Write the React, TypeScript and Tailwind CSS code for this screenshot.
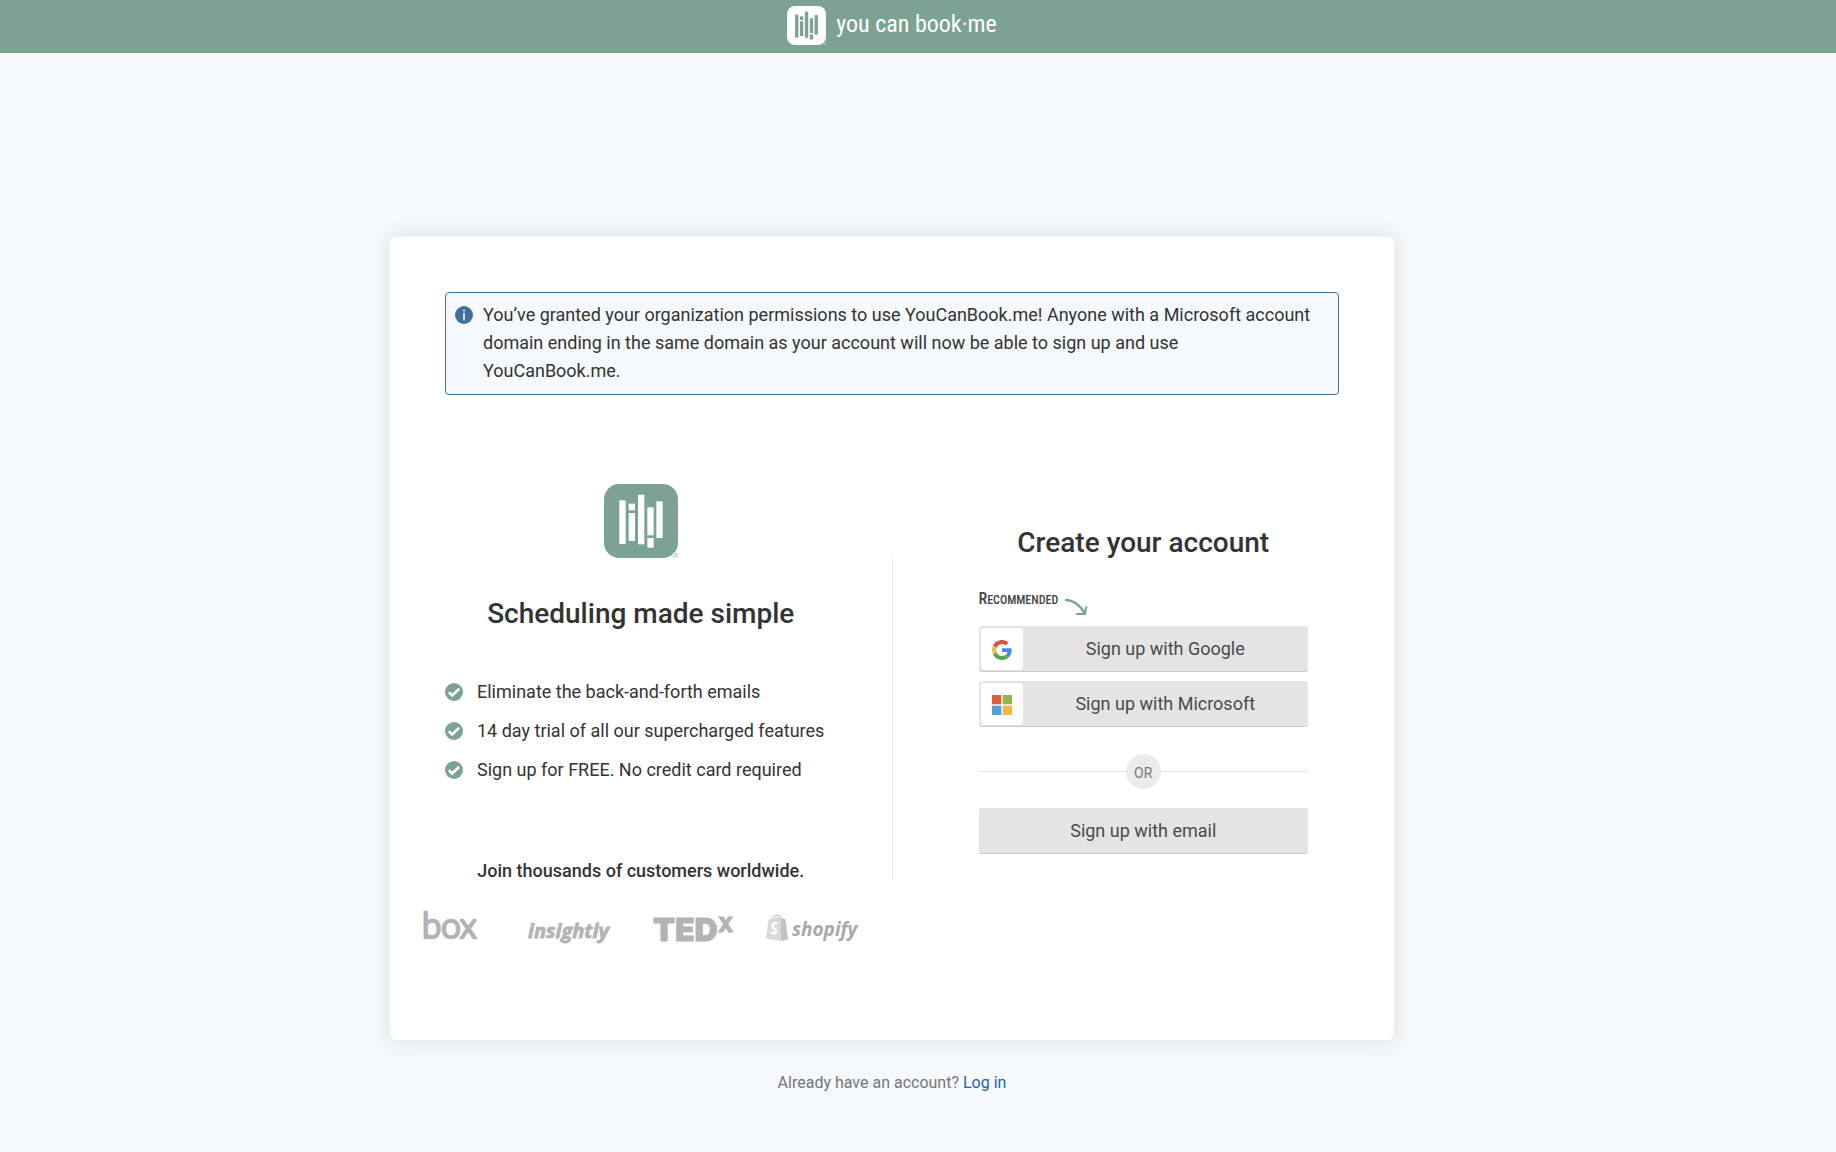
import React from "react";

const BARS = [
  [46, 49, 131],
  [74, 59, 20],
  [74, 87, 84],
  [102, 32, 149],
  [130, 70, 84],
  [130, 162, 29],
  [157, 52, 110],
];

function Mark({ className, tile, bar }: { className: string; tile: string; bar: string }) {
  return (
    <svg viewBox="0 0 222 222" className={className} aria-hidden="true">
      <rect width="222" height="222" rx="46" fill={tile} />
      {BARS.map(([x, y, h]) => (
        <rect key={`${x}-${y}`} x={x} y={y} width="19" height={h} fill={bar} />
      ))}
      <circle cx="214" cy="214" r="9" fill={bar} />
      <circle cx="214" cy="214" r="6" fill={bar} stroke={tile} strokeOpacity="0.6" strokeWidth="3" />
      <circle cx="214" cy="214" r="2" fill={tile} fillOpacity="0.6" />
    </svg>
  );
}

function InfoIcon() {
  return (
    <svg viewBox="0 0 18 18" className="mt-[5px] h-[18px] w-[18px] shrink-0" aria-hidden="true">
      <circle cx="9" cy="9" r="9" fill="#41719a" />
      <circle cx="9" cy="4.6" r="1.1" fill="#dfe9f1" />
      <rect x="8.1" y="6.8" width="1.8" height="7.4" fill="#dfe9f1" />
    </svg>
  );
}

function CheckIcon() {
  return (
    <svg viewBox="0 0 18 18" className="h-[18px] w-[18px] shrink-0" aria-hidden="true">
      <circle cx="9" cy="9" r="9" fill="#7ca294" />
      <path d="M3.8 9.2 7.2 12.4 14.2 5.8" fill="none" stroke="#fff" strokeWidth="2.6" />
    </svg>
  );
}

function GoogleIcon() {
  return (
    <svg viewBox="0 0 48 48" className="mt-0.5 h-5 w-5" aria-hidden="true">
      <path fill="#dc4e41" d="M24 9.5c3.54 0 6.71 1.22 9.21 3.6l6.85-6.85C35.9 2.38 30.47 0 24 0 14.62 0 6.51 5.38 2.56 13.22l7.98 6.19C12.43 13.72 17.74 9.5 24 9.5z" />
      <path fill="#4a86e8" d="M46.98 24.55c0-1.57-.15-3.09-.38-4.55H24v9.02h12.94c-.58 2.96-2.26 5.48-4.78 7.18l7.73 6c4.51-4.18 7.09-10.36 7.09-17.65z" />
      <path fill="#f4bd45" d="M10.53 28.59c-.48-1.45-.76-2.99-.76-4.59s.27-3.14.76-4.59l-7.98-6.19C.92 16.46 0 20.12 0 24c0 3.88.92 7.54 2.56 10.78l7.97-6.19z" />
      <path fill="#57a65a" d="M24 48c6.48 0 11.93-2.13 15.89-5.81l-7.73-6c-2.15 1.45-4.92 2.3-8.16 2.3-6.26 0-11.57-4.22-13.47-9.91l-7.98 6.19C6.51 42.62 14.62 48 24 48z" />
    </svg>
  );
}

function MicrosoftIcon() {
  return (
    <svg viewBox="0 0 20 20" className="mt-0.5 h-5 w-5" aria-hidden="true">
      <rect width="9.3" height="9.3" fill="#dd5f3b" />
      <rect x="10.7" width="9.3" height="9.3" fill="#8fb745" />
      <rect y="10.7" width="9.3" height="9.3" fill="#549fd7" />
      <rect x="10.7" y="10.7" width="9.3" height="9.3" fill="#f3b944" />
    </svg>
  );
}

function ArrowIcon() {
  return (
    <svg viewBox="0 0 24 18" className="mt-[18px] h-[18px] w-6" aria-hidden="true">
      <path d="M1 1.8C9 2.2 16 6.5 20.4 15M12.2 16h8.6l1.6-7.6" fill="none" stroke="#7ca294" strokeWidth="2.2" />
    </svg>
  );
}

function Brands() {
  return (
    <div className="-mx-[22px] flex h-10 items-center">
      <svg viewBox="0 0 56 40" className="h-10 w-14 overflow-visible" role="img" aria-label="box">
        <text x="-1" y="28" fontFamily="Lato, sans-serif" fontWeight="300" fontSize="35" fill="#b3b3b3" stroke="#b3b3b3" strokeWidth="2.6" strokeLinejoin="round">box</text>
      </svg>
      <svg viewBox="0 0 82 40" className="ml-[49px] h-10 w-[82px] overflow-visible" role="img" aria-label="insightly">
        <text x="0" y="28" fontFamily="'Open Sans', sans-serif" fontStyle="italic" fontWeight="700" fontSize="20" fill="#b3b3b3" stroke="#b3b3b3" strokeWidth="0.8" strokeLinejoin="round">insightly</text>
      </svg>
      <svg viewBox="0 0 80 40" className="ml-[43px] h-10 w-20 overflow-visible" role="img" aria-label="TEDx">
        <text x="0" y="31" fontFamily="Inter, sans-serif" fontWeight="900" fontSize="32" fill="#b3b3b3" stroke="#b3b3b3" strokeWidth="0.8">TED</text>
        <text x="65" y="22" fontFamily="Inter, sans-serif" fontWeight="800" fontSize="20" fill="#b3b3b3" stroke="#b3b3b3" strokeWidth="1">X</text>
      </svg>
      <svg viewBox="0 0 91 40" className="ml-[33px] h-10 w-[91px] overflow-visible" role="img" aria-label="shopify">
        <path d="M2.500 9.500 15 7v24L0 28.500z" fill="#d9d9d9" />
        <path d="M15 7l1.500 1.500 3 .5L22 29.500 15 31z" fill="#c2c2c2" />
        <path d="M6 9.500c.5-3 3-5.500 5-4.500 1.500.7 2 2 2 3.500M9 9c.5-2.500 2-4.500 4-4 1.500.3 2.300 1.600 2.300 3" fill="none" stroke="#d0d0d0" strokeWidth="1.1" />
        <path d="M11.400 13.600c-2.600-1.300-5 0-5 2.200 0 2.800 3.900 2.800 3.900 5.500 0 2.200-2.600 2.900-5.300 1" fill="none" stroke="#fff" strokeWidth="2.4" />
        <text x="26" y="26" fontFamily="'Open Sans', sans-serif" fontStyle="italic" fontWeight="700" fontSize="19" fill="#a8a8a8">shopify</text>
      </svg>
    </div>
  );
}

function SignUpButton({ icon, children }: { icon?: React.ReactNode; children: React.ReactNode }) {
  return (
    <button
      type="button"
      className="flex h-[46px] w-full items-center rounded-[3px] border-b border-[#c9c9c9] bg-[#e4e4e4] text-lg text-[#4a4a4a]"
    >
      {icon && (
        <span className="ml-0.5 flex h-[42px] w-[42px] items-center justify-center rounded-sm bg-white">{icon}</span>
      )}
      <span className="flex-1 text-center">{children}</span>
    </button>
  );
}

const FEATURES = [
  "Eliminate the back-and-forth emails",
  "14 day trial of all our supercharged features",
  "Sign up for FREE. No credit card required",
];

export default function App() {
  return (
    <div className="min-h-screen bg-[#f5f9fc] font-['Roboto',sans-serif] text-[#333]">
      <header className="flex h-[53px] items-start justify-center bg-[#7ca294] pt-1.5 pr-[52px]">
        <a href="#" className="flex gap-2.5 text-white">
          <Mark className="h-[39px] w-[39px]" tile="#ffffff" bar="#7ca294" />
          <span className="font-['Liberation_Sans_Narrow','Roboto_Condensed','Liberation_Sans',sans-serif] text-2xl leading-9">
            you can book·me
          </span>
        </a>
      </header>

      <div className="flex flex-col items-center pt-[183px] pr-[52px]">
        <main className="w-full max-w-[1006px] rounded-lg border border-[#f0f0f0] bg-white px-[55px] pt-[55px] pb-[86px] shadow-[0_0_20px_rgba(0,0,0,0.1)]">
          <div role="status" className="flex gap-2.5 rounded border border-[#41719a] bg-[#f5f9fc] pt-2 pr-6 pb-[9px] pl-[9px]">
            <InfoIcon />
            <p className="text-lg leading-7">
              You’ve granted your organization permissions to use YouCanBook.me! Anyone with a Microsoft account domain
              ending in the same domain as your account will now be able to sign up and use YouCanBook.me.
            </p>
          </div>

          <div className="mt-[89px] grid grid-cols-[1fr_1px_1fr]">
            <section className="pr-[55px]">
              <Mark className="mx-auto h-[74px] w-[74px]" tile="#7ca294" bar="#ffffff" />
              <h1 className="mt-[38px] text-center text-[28px] leading-9 font-medium">Scheduling made simple</h1>
              <ul className="mt-[46px] flex flex-col gap-3">
                {FEATURES.map((f) => (
                  <li key={f} className="flex items-center gap-3.5 text-lg leading-[27px]">
                    <CheckIcon />
                    {f}
                  </li>
                ))}
              </ul>
              <p className="mt-[74px] text-center text-lg leading-[27px] font-medium">
                Join thousands of customers worldwide.
              </p>
              <div className="mt-[26px]">
                <Brands />
              </div>
            </section>

            <div className="my-[74px] h-[322px] bg-[#e8e8e8]" />

            <section className="pt-[41px] pr-[31px] pl-[86px]">
              <h2 className="text-center text-[28px] leading-9 font-medium">Create your account</h2>
              <div className="mt-[19px] flex h-[46px] gap-1.5">
                <span className="pt-[7px] font-['Liberation_Sans_Narrow','Roboto_Condensed','Liberation_Sans',sans-serif] text-base leading-6 font-medium text-[#444]">
                  R<span className="text-xs">ECOMMENDED</span>
                </span>
                <ArrowIcon />
              </div>
              <div className="flex flex-col gap-[9px]">
                <SignUpButton icon={<GoogleIcon />}>Sign up with Google</SignUpButton>
                <SignUpButton icon={<MicrosoftIcon />}>Sign up with Microsoft</SignUpButton>
              </div>
              <div className="mt-[27px] mb-[19px] flex h-[35px] items-center">
                <span className="h-px flex-1 bg-[#e4e4e4]" />
                <span className="flex h-[35px] w-[35px] items-center justify-center rounded-full bg-[#ebebeb] pt-0.5 text-sm text-[#777]">
                  OR
                </span>
                <span className="h-px flex-1 bg-[#e4e4e4]" />
              </div>
              <SignUpButton>Sign up with email</SignUpButton>
            </section>
          </div>
        </main>

        <p className="my-[30px] text-base leading-6 text-[#757575]">
          Already have an account?{" "}
          <a href="#" className="text-[#1f5fb4]">
            Log in
          </a>
        </p>
      </div>
    </div>
  );
}
